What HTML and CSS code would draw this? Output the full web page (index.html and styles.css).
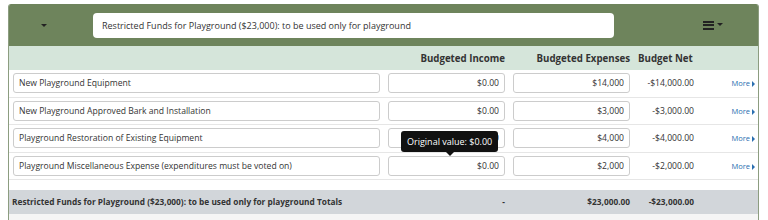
FILE: index.html
```html
<!DOCTYPE html>
<html lang="en">
<head>
    <meta charset="UTF-8">
    <meta name="viewport" content="width=device-width, initial-scale=1.0">
    <title>Budget Category</title>
    <link rel="stylesheet" href="styles.css">
</head>
<body>
    <div class="budget-panel">
        <!-- Category header -->
        <div class="panel-heading">
            <div class="toggle-cell"><span class="caret"></span></div>
            <input type="text" class="title-input" value="Restricted Funds for Playground ($23,000): to be used only for playground">
            <div class="menu-cell">
                <span class="hamburger"><i></i><i></i><i></i></span><span class="caret small"></span>
            </div>
        </div>

        <table class="budget-table">
            <colgroup>
                <col class="col-name">
                <col class="col-income">
                <col class="col-expense">
                <col class="col-net">
                <col class="col-more">
            </colgroup>
            <thead>
                <tr>
                    <th></th>
                    <th class="num">Budgeted Income</th>
                    <th class="num">Budgeted Expenses</th>
                    <th class="net-head">Budget Net</th>
                    <th></th>
                </tr>
            </thead>
            <tbody>
                <tr>
                    <td><input type="text" class="field" value="New Playground Equipment"></td>
                    <td><input type="text" class="field num" value="$0.00"></td>
                    <td><input type="text" class="field num" value="$14,000"></td>
                    <td class="num">-$14,000.00</td>
                    <td class="more"><a href="#">More <span class="arrow"></span></a></td>
                </tr>
                <tr>
                    <td><input type="text" class="field" value="New Playground Approved Bark and Installation"></td>
                    <td><input type="text" class="field num" value="$0.00"></td>
                    <td><input type="text" class="field num" value="$3,000"></td>
                    <td class="num">-$3,000.00</td>
                    <td class="more"><a href="#">More <span class="arrow"></span></a></td>
                </tr>
                <tr>
                    <td><input type="text" class="field" value="Playground Restoration of Existing Equipment"></td>
                    <td class="tip-cell">
                        <input type="text" class="field num" value="$0.00">
                        <div class="tooltip">Original value: $0.00</div>
                    </td>
                    <td><input type="text" class="field num" value="$4,000"></td>
                    <td class="num">-$4,000.00</td>
                    <td class="more"><a href="#">More <span class="arrow"></span></a></td>
                </tr>
                <tr>
                    <td><input type="text" class="field" value="Playground Miscellaneous Expense (expenditures must be voted on)"></td>
                    <td><input type="text" class="field num" value="$0.00"></td>
                    <td><input type="text" class="field num" value="$2,000"></td>
                    <td class="num">-$2,000.00</td>
                    <td class="more"><a href="#">More <span class="arrow"></span></a></td>
                </tr>
                <tr class="spacer"><td colspan="5"></td></tr>
            </tbody>
            <tfoot>
                <tr>
                    <td class="total-label">Restricted Funds for Playground ($23,000): to be used only for playground Totals</td>
                    <td class="num">-</td>
                    <td class="num">$23,000.00</td>
                    <td class="num">-$23,000.00</td>
                    <td></td>
                </tr>
            </tfoot>
        </table>
        <div class="panel-bottom"></div>
    </div>
</body>
</html>
```

FILE: styles.css
```css
body {
    font-family: "Open Sans", Arial, sans-serif;
    font-size: 8.6px;
    color: #333;
    margin: 4px 9px 0 8px;
    background-color: #fff;
}

.budget-panel {
    border: 1px solid #8c9d80;
    border-top: none;
    border-radius: 3px 3px 0 0;
    overflow: hidden;
}

/* Green header bar */
.panel-heading {
    display: flex;
    align-items: center;
    height: 42px;
    background-color: #6e845c;
}

.toggle-cell {
    width: 70px;
    margin-right: 14px;
    display: flex;
    justify-content: center;
}

.caret {
    display: inline-block;
    width: 0;
    height: 0;
    border-left: 3px solid transparent;
    border-right: 3px solid transparent;
    border-top: 3px solid #222;
}

.caret.small {
    margin-left: 3px;
    margin-top: -2px;
}

.title-input {
    width: 521px;
    height: 25px;
    box-sizing: border-box;
    border: none;
    border-radius: 4px;
    padding: 0 9px;
    font-family: inherit;
    font-size: 9px;
    color: #333;
    background-color: #fff;
}

.menu-cell {
    flex: 1;
    display: flex;
    justify-content: center;
    align-items: center;
    padding-left: 54px;
}

.hamburger {
    display: inline-flex;
    flex-direction: column;
    justify-content: space-between;
    width: 11px;
    height: 9px;
}

.hamburger i {
    display: block;
    height: 2px;
    background-color: #222;
}

/* Table */
.budget-table {
    width: 100%;
    border-collapse: collapse;
    table-layout: fixed;
}

.col-name { width: 375px; }
.col-income { width: 125px; }
.col-expense { width: 125px; }
.col-net { width: 64px; }

.budget-table thead th {
    background-color: #d5e5da;
    height: 24px;
    padding: 0 4px;
    font-weight: bold;
    font-size: 9.7px;
    color: #333;
    text-align: left;
}

.budget-table th.num {
    text-align: right;
}

.budget-table th.net-head {
    padding-left: 4px;
    white-space: nowrap;
}

.budget-table tbody td {
    height: 27.4px;
    padding: 0 4px;
    border-top: 1px solid #e6e6e6;
    box-sizing: border-box;
    vertical-align: middle;
}

.budget-table tbody tr:first-child td {
    border-top: none;
}

.budget-table td.num {
    text-align: right;
    padding-right: 4px;
}

.field {
    width: 100%;
    height: 20px;
    box-sizing: border-box;
    border: 1px solid #ccc;
    border-radius: 3px;
    padding: 0 5px;
    font-family: inherit;
    font-size: 8.6px;
    color: #333;
    background-color: #fff;
}

.field.num {
    text-align: right;
}

.more {
    text-align: right;
    padding-right: 3px !important;
}

.more a {
    color: #2a6fb0;
    text-decoration: none;
    font-size: 7.5px;
}

.arrow {
    display: inline-block;
    width: 0;
    height: 0;
    border-top: 3px solid transparent;
    border-bottom: 3px solid transparent;
    border-left: 3px solid #2a6fb0;
    vertical-align: middle;
}

.budget-table tbody tr.spacer td {
    height: 10px;
}

/* Tooltip over the income field */
.tip-cell {
    position: relative;
}

.tooltip {
    position: absolute;
    left: 17px;
    top: 6px;
    padding: 4px 6px;
    background-color: #111;
    color: #fff;
    font-size: 9px;
    border-radius: 3px;
    white-space: nowrap;
}

.tooltip::after {
    content: "";
    position: absolute;
    left: 50%;
    bottom: -4px;
    margin-left: -4px;
    border-left: 4px solid transparent;
    border-right: 4px solid transparent;
    border-top: 4px solid #111;
}

/* Totals */
.budget-table tfoot td {
    background-color: #d2d6da;
    height: 24px;
    padding: 0 4px;
    font-weight: bold;
    font-size: 8.3px;
    color: #333;
}

.budget-table tfoot td.total-label {
    padding-left: 3px;
    white-space: nowrap;
    overflow: visible;
}

.panel-bottom {
    height: 12px;
    background-color: #f5f5f5;
}
```
